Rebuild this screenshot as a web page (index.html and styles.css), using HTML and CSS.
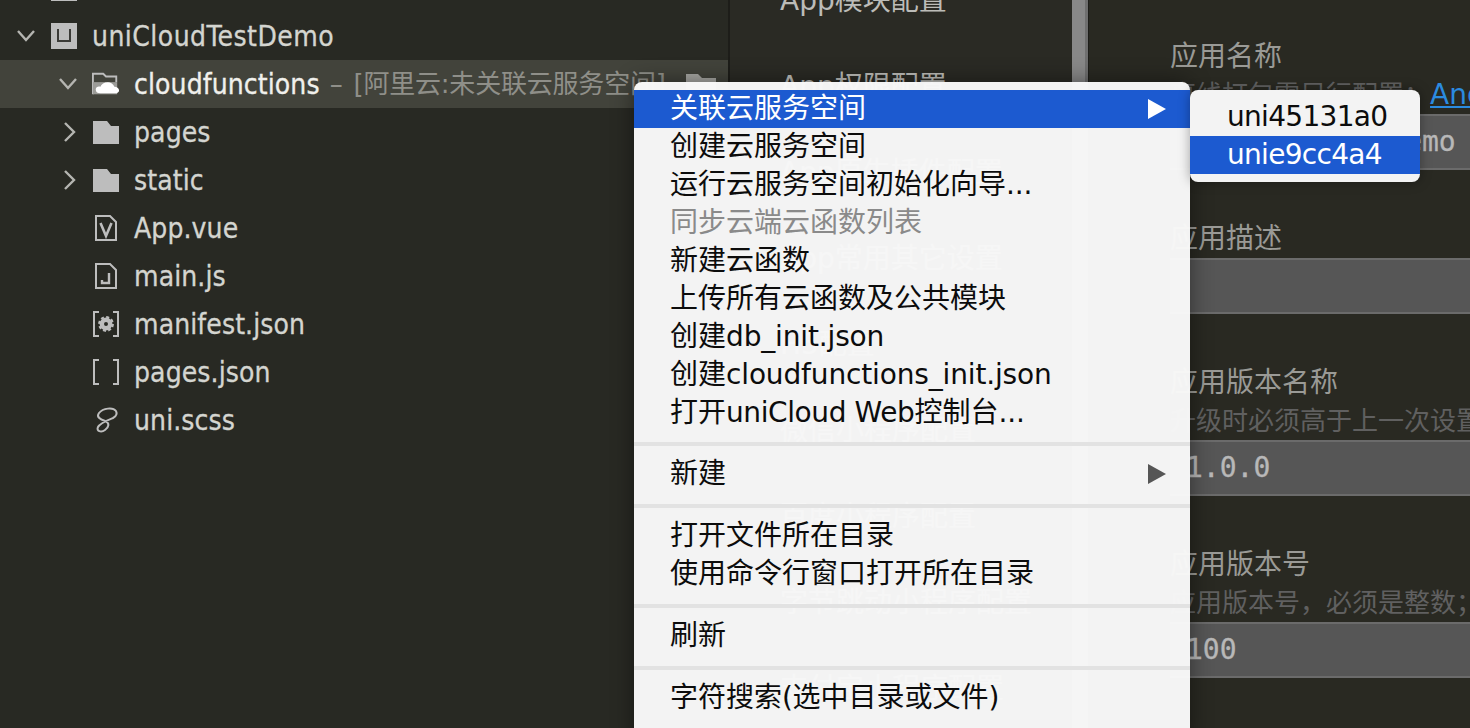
FILE: index.html
```html
<!DOCTYPE html>
<html lang="zh-CN">
<head>
<meta charset="utf-8">
<title>uniCloudTestDemo</title>
<link rel="stylesheet" href="styles.css">
</head>
<body>
<div class="app">
  <aside class="tree">
    <div class="sliver"></div>
    <div class="row depth0">
      <svg class="chev" viewBox="0 0 24 24"><path d="M4 7l8 9 8-9"/></svg>
      <svg class="ico" viewBox="0 0 28 28"><rect x="1" y="1" width="26" height="26" fill="#bdbdbd"/><path d="M8 7v12h12V7" fill="none" stroke="#3a3a36" stroke-width="2"/></svg>
      <span class="name root">uniCloudTestDemo</span>
    </div>
    <div class="row depth1 selected">
      <svg class="chev" viewBox="0 0 24 24"><path d="M4 7l8 9 8-9"/></svg>
      <svg class="ico" viewBox="0 0 30 28"><path d="M1 25V3h11l3 3h11v6" fill="none" stroke="#bdbdbd" stroke-width="2"/><path d="M1 25V12h26v13z" fill="#9c9c98"/><path d="M9 24c-3 0-5-1-5-4s3-4 5-3c1-3 4-5 8-5 3 0 6 2 7 5 3 0 5 2 5 4s-2 3-4 3z" fill="#fff"/></svg>
      <span class="name bright">cloudfunctions</span>
      <span class="meta"><span class="dash">–</span>[阿里云:未关联云服务空间]</span>
      <svg class="endico" viewBox="0 0 30 24"><path d="M0 24V1h12l4 4h14v19z" fill="#a6a6a2"/></svg>
    </div>
    <div class="row depth1">
      <svg class="chev" viewBox="0 0 24 24"><path d="M9 3l9 9-9 9"/></svg>
      <svg class="ico" viewBox="0 0 28 28"><path d="M1 26V3h14l4 5h8v18z" fill="#bdbdbd"/></svg>
      <span class="name">pages</span>
    </div>
    <div class="row depth1">
      <svg class="chev" viewBox="0 0 24 24"><path d="M9 3l9 9-9 9"/></svg>
      <svg class="ico" viewBox="0 0 28 28"><path d="M1 26V3h14l4 5h8v18z" fill="#bdbdbd"/></svg>
      <span class="name">static</span>
    </div>
    <div class="row depth1">
      <span class="chev"></span>
      <svg class="ico" viewBox="0 0 28 28"><path d="M4 2h14l6 6v18H4z" fill="none" stroke="#bdbdbd" stroke-width="2"/><path d="M8.5 9l5.5 13 5.5-13" fill="none" stroke="#bdbdbd" stroke-width="2.6"/></svg>
      <span class="name">App.vue</span>
    </div>
    <div class="row depth1">
      <span class="chev"></span>
      <svg class="ico" viewBox="0 0 28 28"><path d="M4 2h14l6 6v18H4z" fill="none" stroke="#bdbdbd" stroke-width="2"/><path d="M17 11v10h-7v-3" fill="none" stroke="#bdbdbd" stroke-width="2.4"/></svg>
      <span class="name">main.js</span>
    </div>
    <div class="row depth1">
      <span class="chev"></span>
      <svg class="ico" viewBox="0 0 28 28"><path d="M7 2H2v24h5M21 2h5v24h-5" fill="none" stroke="#bdbdbd" stroke-width="2"/><circle cx="14" cy="14" r="4.2" fill="none" stroke="#bdbdbd" stroke-width="4.4"/><circle cx="14" cy="14" r="6.8" fill="none" stroke="#bdbdbd" stroke-width="2.2" stroke-dasharray="3 2.34"/></svg>
      <span class="name">manifest.json</span>
    </div>
    <div class="row depth1">
      <span class="chev"></span>
      <svg class="ico" viewBox="0 0 28 28"><path d="M7 2H2v24h5M21 2h5v24h-5" fill="none" stroke="#bdbdbd" stroke-width="2"/></svg>
      <span class="name">pages.json</span>
    </div>
    <div class="row depth1">
      <span class="chev"></span>
      <svg class="ico" viewBox="0 0 28 28"><path d="M24 5C21 1 11 2 7 7c-3 4 1 6 6 8 5 2 4 6 0 9-4 3-9 1-7-3 2-4 10-7 15-9 4-2 4-5 3-7" fill="none" stroke="#bdbdbd" stroke-width="2"/></svg>
      <span class="name">uni.scss</span>
    </div>
  </aside>

  <nav class="nav">
    <div class="nav-item">App模块配置</div>
    <div class="nav-item">App权限配置</div>
    <div class="nav-item">App原生插件配置</div>
    <div class="nav-item">App常用其它设置</div>
    <div class="nav-item">H5配置</div>
    <div class="nav-item">微信小程序配置</div>
    <div class="nav-item">百度小程序配置</div>
    <div class="nav-item">字节跳动小程序配置</div>
    <div class="nav-item">支付宝小程序配置</div>
  </nav>
  <div class="scrollbar"></div>

  <main class="form">
    <section class="group">
      <div class="label">应用名称</div>
      <div class="hint">离线打包需另行配置：<a class="link">Android</a></div>
      <div class="input">uniCloudTestDemo</div>
    </section>
    <section class="group">
      <div class="label">应用描述</div>
      <div class="input"></div>
    </section>
    <section class="group">
      <div class="label">应用版本名称</div>
      <div class="hint">升级时必须高于上一次设置的值</div>
      <div class="input">1.0.0</div>
    </section>
    <section class="group">
      <div class="label">应用版本号</div>
      <div class="hint">应用版本号，必须是整数；升级时</div>
      <div class="input">100</div>
    </section>
  </main>
</div>

<div class="menu">
  <div class="item active"><span>关联云服务空间</span><i class="arrow"></i></div>
  <div class="item">创建云服务空间</div>
  <div class="item">运行云服务空间初始化向导<span class="l">...</span></div>
  <div class="item disabled">同步云端云函数列表</div>
  <div class="item">新建云函数</div>
  <div class="item">上传所有云函数及公共模块</div>
  <div class="item">创建<span class="l">db_init.json</span></div>
  <div class="item">创建<span class="l">cloudfunctions_init.json</span></div>
  <div class="item">打开<span class="l narrow">uniCloud Web</span>控制台<span class="l">...</span></div>
  <div class="sep short"></div>
  <div class="item"><span>新建</span><i class="arrow"></i></div>
  <div class="sep"></div>
  <div class="item">打开文件所在目录</div>
  <div class="item">使用命令行窗口打开所在目录</div>
  <div class="sep"></div>
  <div class="item">刷新</div>
  <div class="sep"></div>
  <div class="item">字符搜索<span class="l narrow">(</span>选中目录或文件<span class="l narrow">)</span></div>
</div>

<div class="submenu">
  <div class="subitem">uni45131a0</div>
  <div class="subitem active">unie9cc4a4</div>
</div>
</body>
</html>
```

FILE: styles.css
```css
* { box-sizing: border-box; }

html, body {
  margin: 0;
  height: 100%;
  overflow: hidden;
  background: #282923;
}

body {
  font-family: "DejaVu Sans", "Noto Sans CJK SC", sans-serif;
  font-size: 28px;
  line-height: 38px;
}

.l { letter-spacing: -0.15px; }
.l.narrow { letter-spacing: -0.4px; }

.app {
  display: flex;
  height: 728px;
  overflow: hidden;
}

/* file tree */
.tree {
  width: 728px;
  flex: none;
  overflow: hidden;
  color: #d4d5d0;
}

.sliver {
  width: 26px;
  height: 1px;
  margin: 0 0 11px 51px;
  background: #bdbdbd;
}

.row {
  display: flex;
  align-items: center;
  height: 48px;
  white-space: nowrap;
}

.depth0 { padding-left: 14px; }
.depth1 { padding-left: 56px; }

.selected { background: #42433b; }

.chev {
  display: block;
  flex: none;
  width: 24px;
  height: 24px;
  margin-right: 12px;
}

.chev path {
  fill: none;
  stroke: #b5b5b1;
  stroke-width: 2.4;
}

.ico {
  display: block;
  flex: none;
  width: 28px;
  height: 28px;
  margin-right: 14px;
}

.name {
  padding-top: 2px;
  font-stretch: condensed;
  letter-spacing: 0.1px;
  -webkit-text-stroke: 0.3px currentColor;
}

.name.root { letter-spacing: 0.45px; }

.bright { color: #f0f0ec; }

.meta {
  color: #8f8f89;
  font-size: 26px;
  letter-spacing: -0.2px;
}

.dash { margin: 0 11px 0 10px; }

.endico {
  display: block;
  width: 30px;
  height: 24px;
  margin-left: 20px;
  margin-top: 2px;
}

/* middle navigation */
.nav {
  width: 344px;
  flex: none;
  padding-left: 50px;
  margin-top: -42px;
  border-left: 2px solid #1d1d19;
  background: #2a2a24;
  color: #bcbcb8;
  overflow: hidden;
}

.nav-item {
  height: 86px;
  line-height: 86px;
  white-space: nowrap;
}

.scrollbar {
  width: 16px;
  flex: none;
  background: linear-gradient(to right, #888 0 13px, #6f6f6f 13px);
}

/* form */
.form {
  flex: 1;
  min-width: 0;
  display: flex;
  flex-direction: column;
  gap: 50px;
  padding: 38px 0 0 81px;
  border-left: 1px solid #1d1d19;
  background: #292922;
  overflow: hidden;
  white-space: nowrap;
}

.label {
  color: #9a9a96;
  height: 38px;
}

.hint {
  color: #606060;
  font-size: 26px;
  height: 38px;
}

.link {
  color: #2b8be0;
  text-decoration: underline;
  font-size: 28px;
}

.input {
  height: 56px;
  padding-left: 16px;
  border-top: 2px solid #6b6b6b;
  border-bottom: 2px solid #6b6b6b;
  background: #565656;
  color: #b8b8b8;
  font-family: "DejaVu Sans Mono", monospace;
  font-size: 28px;
  line-height: 52px;
  -webkit-text-stroke: 0.3px currentColor;
}

/* context menu */
.menu {
  position: absolute;
  left: 634px;
  top: 82px;
  width: 556px;
  height: 660px;
  padding-top: 8px;
  border-radius: 8px 8px 0 0;
  background: rgba(246.5, 246.5, 246.5, 0.985);
  box-shadow: 0 0 22px rgba(0, 0, 0, 0.45);
  color: #0c0c0c;
}

.item {
  display: flex;
  align-items: center;
  height: 38px;
  padding-left: 36px;
  white-space: pre;
}

.disabled { color: #8a8a8a; }

.active {
  background: #1c5ad0;
  color: #fff;
}

.arrow {
  width: 0;
  height: 0;
  margin-left: auto;
  margin-right: 24px;
  border-left: 18px solid #555;
  border-top: 10px solid transparent;
  border-bottom: 10px solid transparent;
}

.active .arrow { border-left-color: #fff; }

.sep {
  height: 4px;
  margin: 11px 0 9px;
  background: #e2e2e2;
}

.sep.short { margin-top: 10px; }

.submenu {
  position: absolute;
  left: 1190px;
  top: 90px;
  width: 230px;
  height: 92px;
  padding-top: 8px;
  border-radius: 8px;
  background: #f3f3f3;
  box-shadow: 0 0 12px rgba(0, 0, 0, 0.35);
  color: #0c0c0c;
  letter-spacing: -0.7px;
}

.subitem {
  height: 38px;
  padding-left: 37px;
}

.subitem.active { color: #fff; }
```
